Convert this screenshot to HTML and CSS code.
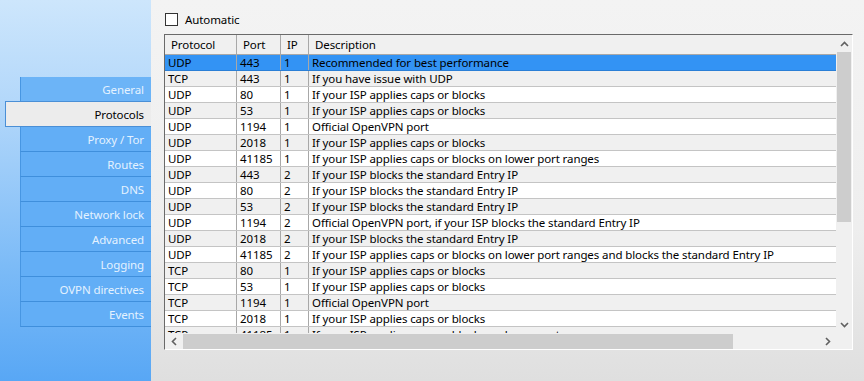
FILE: index.html
```html
<!DOCTYPE html>
<html>
<head>
<meta charset="utf-8">
<link rel="stylesheet" href="styles.css">
</head>
<body>
<div class="app">
  <nav class="sidebar">
    <ul class="tabs">
      <li class="tab">General</li>
      <li class="tab active">Protocols</li>
      <li class="tab">Proxy / Tor</li>
      <li class="tab">Routes</li>
      <li class="tab">DNS</li>
      <li class="tab">Network lock</li>
      <li class="tab">Advanced</li>
      <li class="tab">Logging</li>
      <li class="tab">OVPN directives</li>
      <li class="tab">Events</li>
    </ul>
  </nav>
  <main class="panel">
    <label class="check-row"><span class="checkbox"></span><span>Automatic</span></label>
    <div class="list-frame">
      <div class="list-main">
        <div class="view">
          <div class="row head"><div class="c">Protocol</div><div class="c">Port</div><div class="c">IP</div><div class="c">Description</div></div>
          <div class="row sel"><div class="c">UDP</div><div class="c">443</div><div class="c">1</div><div class="c">Recommended for best performance</div></div>
          <div class="row alt"><div class="c">TCP</div><div class="c">443</div><div class="c">1</div><div class="c">If you have issue with UDP</div></div>
          <div class="row"><div class="c">UDP</div><div class="c">80</div><div class="c">1</div><div class="c">If your ISP applies caps or blocks</div></div>
          <div class="row alt"><div class="c">UDP</div><div class="c">53</div><div class="c">1</div><div class="c">If your ISP applies caps or blocks</div></div>
          <div class="row"><div class="c">UDP</div><div class="c">1194</div><div class="c">1</div><div class="c">Official OpenVPN port</div></div>
          <div class="row alt"><div class="c">UDP</div><div class="c">2018</div><div class="c">1</div><div class="c">If your ISP applies caps or blocks</div></div>
          <div class="row"><div class="c">UDP</div><div class="c">41185</div><div class="c">1</div><div class="c">If your ISP applies caps or blocks on lower port ranges</div></div>
          <div class="row alt"><div class="c">UDP</div><div class="c">443</div><div class="c">2</div><div class="c">If your ISP blocks the standard Entry IP</div></div>
          <div class="row"><div class="c">UDP</div><div class="c">80</div><div class="c">2</div><div class="c">If your ISP blocks the standard Entry IP</div></div>
          <div class="row alt"><div class="c">UDP</div><div class="c">53</div><div class="c">2</div><div class="c">If your ISP blocks the standard Entry IP</div></div>
          <div class="row"><div class="c">UDP</div><div class="c">1194</div><div class="c">2</div><div class="c">Official OpenVPN port, if your ISP blocks the standard Entry IP</div></div>
          <div class="row alt"><div class="c">UDP</div><div class="c">2018</div><div class="c">2</div><div class="c">If your ISP blocks the standard Entry IP</div></div>
          <div class="row"><div class="c">UDP</div><div class="c">41185</div><div class="c">2</div><div class="c">If your ISP applies caps or blocks on lower port ranges and blocks the standard Entry IP</div></div>
          <div class="row alt"><div class="c">TCP</div><div class="c">80</div><div class="c">1</div><div class="c">If your ISP applies caps or blocks</div></div>
          <div class="row"><div class="c">TCP</div><div class="c">53</div><div class="c">1</div><div class="c">If your ISP applies caps or blocks</div></div>
          <div class="row alt"><div class="c">TCP</div><div class="c">1194</div><div class="c">1</div><div class="c">Official OpenVPN port</div></div>
          <div class="row"><div class="c">TCP</div><div class="c">2018</div><div class="c">1</div><div class="c">If your ISP applies caps or blocks</div></div>
          <div class="row alt"><div class="c">TCP</div><div class="c">41185</div><div class="c">1</div><div class="c">If your ISP applies caps or blocks on lower port ranges</div></div>
        </div>
        <div class="vscroll">
          <div class="arrow"><svg width="9" height="6" viewBox="0 0 9 6"><polyline points="1,5 4.5,1.5 8,5" fill="none" stroke="#606060" stroke-width="1.6"/></svg></div>
          <div class="vtrack"><div class="vthumb"></div></div>
          <div class="arrow"><svg width="9" height="6" viewBox="0 0 9 6"><polyline points="1,1 4.5,4.5 8,1" fill="none" stroke="#606060" stroke-width="1.6"/></svg></div>
        </div>
      </div>
      <div class="list-bottom">
        <div class="hscroll">
          <div class="arrow"><svg width="6" height="9" viewBox="0 0 6 9"><polyline points="5,1 1.5,4.5 5,8" fill="none" stroke="#606060" stroke-width="1.6"/></svg></div>
          <div class="htrack"><div class="hthumb"></div></div>
          <div class="arrow"><svg width="6" height="9" viewBox="0 0 6 9"><polyline points="1,1 4.5,4.5 1,8" fill="none" stroke="#606060" stroke-width="1.6"/></svg></div>
        </div>
        <div class="corner"></div>
      </div>
    </div>
  </main>
</div>
</body>
</html>
```

FILE: styles.css
```css
* { box-sizing: border-box; }
html, body { margin: 0; padding: 0; }
body {
  width: 864px;
  height: 381px;
  overflow: hidden;
  font-family: "Noto Sans", "Open Sans", sans-serif;
  font-size: 11.5px;
  letter-spacing: -0.1px;
  color: #000;
}
.app {
  display: flex;
  height: 381px;
}
.sidebar {
  width: 151px;
  flex: none;
  background: linear-gradient(to bottom, #cde6fc 0%, #b0d6fa 30%, #7cbbf7 70%, #58a7f5 100%);
  padding-top: 77px;
}
.tabs {
  list-style: none;
  margin: 0;
  padding: 0;
}
.tab {
  margin-left: 20px;
  height: 25px;
  line-height: 25px;
  padding-right: 7px;
  text-align: right;
  color: #e4f2ff;
  background: #62aef6;
  border-left: 1px solid #4796e2;
  border-bottom: 1px solid #3f8fdc;
}
.tab:first-child { background: #6cb4f7; }
.tab.active {
  margin-left: 5px;
  margin-top: -1px;
  height: 26px;
  background: #ececec;
  color: #000;
  border: 1px solid #4a8fd6;
  border-right: none;
  padding-right: 7px;
  line-height: 25px;
}
.panel {
  flex: 1;
  background: linear-gradient(to bottom, #f3f3f3 0%, #eeeeee 60%, #dfdfdf 100%);
  padding: 11px 0 0 13px;
}
.check-row {
  display: flex;
  align-items: center;
  gap: 7px;
  height: 16px;
  padding-left: 1px;
}
.checkbox {
  width: 13px;
  height: 13px;
  background: #fff;
  border: 1px solid #333;
}
.list-frame {
  margin-top: 7px;
  width: 689px;
  height: 316px;
  border-top: 1px solid #6a6a6a;
  border-left: 1px solid #6a6a6a;
  border-right: 1px solid #ffffff;
  border-bottom: 1px solid #ffffff;
  display: flex;
  flex-direction: column;
}
.list-main {
  display: flex;
  height: 298px;
}
.view {
  width: 671px;
  height: 298px;
  overflow: hidden;
  background: #fff;
}
.row {
  display: grid;
  grid-template-columns: 72px 44px 28px 1fr;
  height: 16px;
  line-height: 15px;
  border-bottom: 1px solid #c4c4c4;
  white-space: nowrap;
  background: #fff;
}
.row.alt { background: #f0f0f0; }
.row.sel { background: #3393f4; border-bottom-color: #2a7fd6; }
.row .c {
  padding-left: 3px;
  border-right: 1px solid #a8a8a8;
  overflow: hidden;
}
.row .c:last-child { border-right: none; }
.row.head {
  height: 20px;
  line-height: 19px;
  background: #f0f0f0;
  border-bottom: 1px solid #a8a8a8;
}
.row.head .c { padding-left: 6px; }
.vscroll {
  width: 16px;
  background: #f0f0f0;
  display: flex;
  flex-direction: column;
}
.vscroll .arrow {
  height: 17px;
  display: flex;
  align-items: center;
  justify-content: center;
}
.vtrack { flex: 1; }
.vthumb {
  margin: 0 1px;
  height: 170px;
  background: #cdcdcd;
}
.list-bottom {
  display: flex;
  height: 16px;
}
.hscroll {
  width: 671px;
  display: flex;
  background: #f0f0f0;
}
.hscroll .arrow {
  width: 17px;
  display: flex;
  align-items: center;
  justify-content: center;
}
.htrack { flex: 1; padding: 1px 0 0 1px; }
.hthumb {
  width: 550px;
  height: 15px;
  background: #cdcdcd;
}
.corner {
  width: 16px;
  background: #f0f0f0;
}
```
